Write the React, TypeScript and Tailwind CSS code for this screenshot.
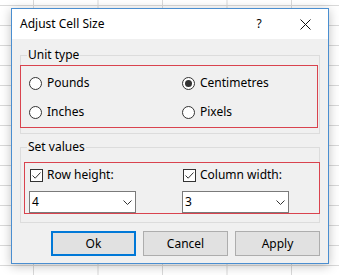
import type { ReactNode } from 'react';

const font = { fontFamily: '"Noto Sans", "Segoe UI", sans-serif' };

function Radio({ checked, label }: { checked?: boolean; label: string }) {
  return (
    <label className="flex h-[20px] items-center gap-[5px]">
      <span className="flex h-[13px] w-[13px] items-center justify-center rounded-full border border-[#333333] bg-white">
        {checked && <span className="h-[7px] w-[7px] rounded-full bg-[#333333]" />}
      </span>
      <span>{label}</span>
    </label>
  );
}

function Check({ label }: { label: string }) {
  return (
    <label className="flex h-[16px] items-center gap-[4px] pl-[1px]">
      <span className="flex h-[13px] w-[13px] items-center justify-center border border-[#333333] bg-white">
        <svg width="11" height="11" viewBox="0 0 11 11">
          <path d="M1.5 5.5 L4.2 8.2 L9.5 2.5" fill="none" stroke="#333333" strokeWidth="1" />
        </svg>
      </span>
      <span>{label}</span>
    </label>
  );
}

function Combo({ value }: { value: string }) {
  return (
    <div className="flex h-[22px] w-[107px] items-center justify-between border border-[#7a7a7a] bg-white pl-[2px] pr-[3px]">
      <span>{value}</span>
      <svg width="9" height="5" viewBox="0 0 9 5">
        <polyline points="0.5,0.5 4.5,4.5 8.5,0.5" fill="none" stroke="#333333" strokeWidth="1" />
      </svg>
    </div>
  );
}

function Group({ title, className, children }: { title: string; className: string; children: ReactNode }) {
  return (
    <fieldset className={`w-full border border-[#dcdcdc] ${className}`}>
      <legend className="ml-[6px] px-[1px] leading-[14px]">{title}</legend>
      {children}
    </fieldset>
  );
}

function Button({ label, focused }: { label: string; focused?: boolean }) {
  return (
    <button
      className={`flex h-[25px] w-[85px] items-center justify-center bg-[#e1e1e1] ${
        focused ? 'border-2 border-[#0078d7]' : 'border border-[#adadad]'
      }`}
    >
      {label}
    </button>
  );
}

export default function App() {
  return (
    <div
      className="h-[275px] w-[339px] overflow-hidden bg-white pt-[8px] pl-[11px] text-[12px] text-black [background-image:linear-gradient(to_right,#d9d9d9_1px,transparent_1px),linear-gradient(to_bottom,#d9d9d9_1px,transparent_1px)] [background-size:64.5px_20px] [background-position:33px_5px]"
      style={font}
    >
      <div className="flex h-[256px] w-[318px] flex-col border border-[#4a8ed0] bg-[#f0f0f0] shadow-[0_2px_10px_rgba(0,0,0,0.25)]">
        <div className="flex h-[30px] items-center bg-white pl-[8px]">
          <span className="flex-1">Adjust Cell Size</span>
          <span className="flex w-[46px] justify-center">?</span>
          <span className="flex w-[46px] justify-center">
            <svg width="11" height="11" viewBox="0 0 11 11">
              <path d="M0.5 0.5 L10.5 10.5 M10.5 0.5 L0.5 10.5" stroke="#111111" strokeWidth="1" />
            </svg>
          </span>
        </div>

        <div className="flex flex-col px-[8px]">
          <Group title="Unit type" className="mt-[9px] pt-[3px] pb-[5px]">
            <div className="-ml-px mr-px grid grid-cols-[153px_1fr] gap-y-[9px] border border-[#d9434e] pt-[7px] pb-[5px] pl-[8px]">
              <Radio label="Pounds" />
              <Radio label="Centimetres" checked />
              <Radio label="Inches" />
              <Radio label="Pixels" />
            </div>
          </Group>

          <Group title="Set values" className="mt-[6px] pt-[8px] pb-[8px]">
            <div className="ml-[3px] -mr-px grid grid-cols-[153px_1fr] gap-y-[8px] border border-[#d9434e] pt-[4px] pl-[4px]">
              <Check label="Row height:" />
              <Check label="Column width:" />
              <Combo value="4" />
              <Combo value="3" />
            </div>
          </Group>

          <div className="mt-[8px] flex justify-end gap-[7px]">
            <Button label="Ok" focused />
            <Button label="Cancel" />
            <Button label="Apply" />
          </div>
        </div>
      </div>
    </div>
  );
}
